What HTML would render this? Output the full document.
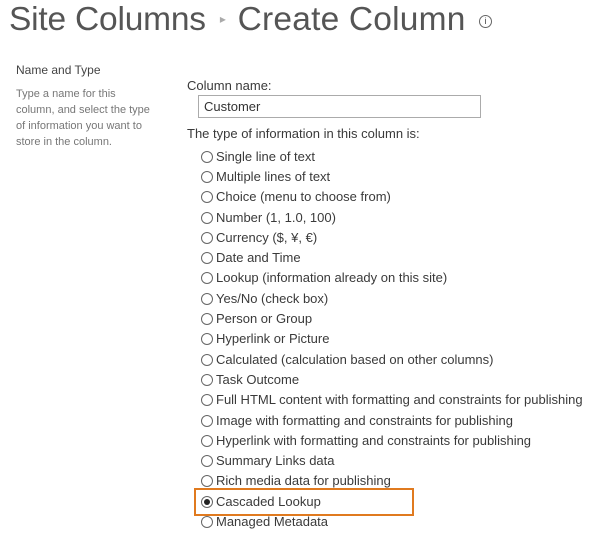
<!DOCTYPE html>
<html><head><style>
body{margin:0;width:605px;height:534px;background:#fff;font-family:"Liberation Sans",sans-serif;position:relative;overflow:hidden;color:#444}
.a{position:absolute;white-space:nowrap}
h1{position:absolute;left:9px;top:1px;margin:0;font-weight:normal;font-size:33.5px;color:#555;white-space:nowrap;letter-spacing:-0.2px}
.r{position:absolute;left:201px;font-size:13px;color:#3a3a3a;white-space:nowrap;line-height:16px}
.r i{display:inline-block;width:10px;height:10px;border:1px solid #666;border-radius:50%;vertical-align:-2px;margin-right:3px;position:relative;background:#fff}
.r i.on:after{content:"";position:absolute;left:2px;top:2px;width:6px;height:6px;border-radius:50%;background:#222}
</style></head><body>
<h1>Site Columns<span style="font-size:12px;color:#aaa;vertical-align:7px;margin:0 12px 0 14px">&#9656;</span><span style="letter-spacing:0.2px">Create Column</span></h1>
<div class="a" style="left:479px;top:15px;width:11px;height:11px;border:1px solid #666;border-radius:50%;font-size:9px;text-align:center;line-height:11px;color:#444">i</div>
<div class="a" style="left:16px;top:63px;font-size:12px;color:#444">Name and Type</div>
<div class="a" style="left:16px;top:86px;font-size:11px;color:#777;line-height:16px">Type a name for this<br>column, and select the type<br>of information you want to<br>store in the column.</div>
<div class="a" style="left:187px;top:78px;font-size:13px;color:#3a3a3a">Column name:</div>
<div class="a" style="left:198px;top:95px;width:281px;height:21px;border:1px solid #ababab"></div>
<div class="a" style="left:204px;top:99px;font-size:13px;color:#333">Customer</div>
<div class="a" style="left:187px;top:126px;font-size:13px;color:#3a3a3a">The type of information in this column is:</div>
<div class="r" style="top:149px"><i></i>Single line of text</div>
<div class="r" style="top:169px"><i></i>Multiple lines of text</div>
<div class="r" style="top:189px"><i></i>Choice (menu to choose from)</div>
<div class="r" style="top:210px"><i></i>Number (1, 1.0, 100)</div>
<div class="r" style="top:230px"><i></i>Currency ($, ¥, €)</div>
<div class="r" style="top:250px"><i></i>Date and Time</div>
<div class="r" style="top:270px"><i></i>Lookup (information already on this site)</div>
<div class="r" style="top:291px"><i></i>Yes/No (check box)</div>
<div class="r" style="top:311px"><i></i>Person or Group</div>
<div class="r" style="top:331px"><i></i>Hyperlink or Picture</div>
<div class="r" style="top:352px"><i></i>Calculated (calculation based on other columns)</div>
<div class="r" style="top:372px"><i></i>Task Outcome</div>
<div class="r" style="top:392px"><i></i>Full HTML content with formatting and constraints for publishing</div>
<div class="r" style="top:413px"><i></i>Image with formatting and constraints for publishing</div>
<div class="r" style="top:433px"><i></i>Hyperlink with formatting and constraints for publishing</div>
<div class="r" style="top:453px"><i></i>Summary Links data</div>
<div class="r" style="top:473px"><i></i>Rich media data for publishing</div>
<div class="r" style="top:494px"><i class="on"></i>Cascaded Lookup</div>
<div class="r" style="top:514px"><i></i>Managed Metadata</div>
<div class="a" style="left:194px;top:488px;width:216px;height:24px;border:2px solid #e07a1f"></div>
</body></html>
